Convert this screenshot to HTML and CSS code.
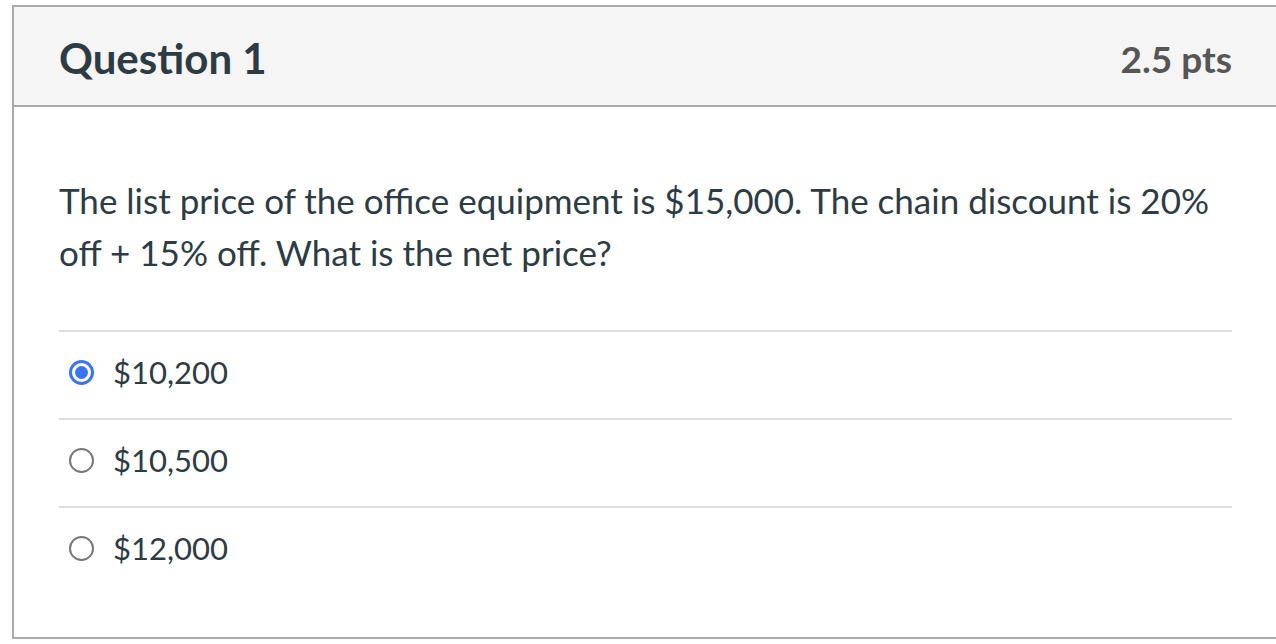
FILE: index.html
```html
<!DOCTYPE html>
<html>
<head>
<meta charset="utf-8">
<link rel="stylesheet" href="styles.css">
</head>
<body>
<div class="card">
  <div class="header">
    <h2 class="title">Question 1</h2>
    <div class="pts">2.5 pts</div>
  </div>
  <div class="content">
    <p class="question">The list price of the office equipment is $15,000. The chain discount is 20% off + 15% off. What is the net price?</p>
    <div class="answers">
      <label class="answer"><span class="radio checked"></span><span class="label">$10,200</span></label>
      <label class="answer"><span class="radio"></span><span class="label">$10,500</span></label>
      <label class="answer"><span class="radio"></span><span class="label">$12,000</span></label>
    </div>
  </div>
</div>
</body>
</html>
```
FILE: styles.css
```css
html, body {
  margin: 0;
  padding: 0;
  overflow: hidden;
  background: #fff;
}
body {
  font-family: Lato, "Open Sans", sans-serif;
  color: #2d3b45;
}
.card {
  margin: 5px 0 0 12px;
  width: 1263px;
  border: 2px solid #aaaaaa;
}
.header {
  height: 100px;
  box-sizing: border-box;
  background: #f5f5f5;
  border-bottom: 2px solid #aaaaaa;
  display: flex;
  align-items: center;
  justify-content: space-between;
  padding: 4px 45px 0 45px;
}
.title {
  margin: 0;
  font-size: 42px;
  font-weight: 700;
  color: #2d3b45;
}
.pts {
  font-size: 37px;
  font-weight: 700;
  color: #565656;
}
.content {
  padding: 0 45px 43px 45px;
}
.question {
  margin: 0;
  padding: 67px 0 52px 0;
  font-size: 35px;
  line-height: 52px;
}
.answers {
  display: flex;
  flex-direction: column;
}
.answer {
  height: 88px;
  box-sizing: border-box;
  border-top: 2px solid #dddddd;
  display: flex;
  align-items: center;
  padding-left: 10px;
  padding-bottom: 6px;
}
.radio {
  width: 25px;
  height: 25px;
  box-sizing: border-box;
  border-radius: 50%;
  border: 2px solid #777777;
  margin-right: 19px;
  flex: none;
  position: relative;
}
.radio.checked {
  border: 3px solid #3b74f1;
  background: #fff;
}
.radio.checked::after {
  content: "";
  position: absolute;
  left: 3px;
  top: 3px;
  width: 13px;
  height: 13px;
  border-radius: 50%;
  background: #3b74f1;
}
.label {
  font-size: 31px;
}
```
